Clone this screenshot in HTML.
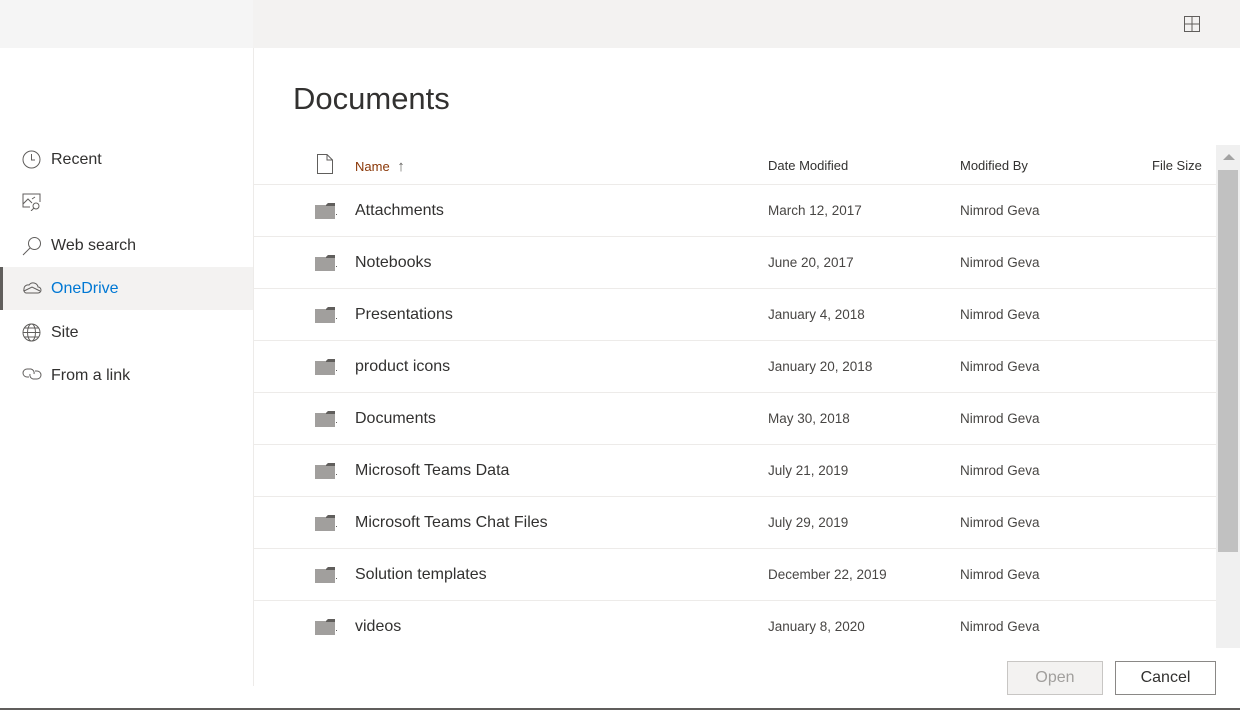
<!DOCTYPE html><html><head><style>
body{margin:0;width:1240px;height:710px;position:relative;overflow:hidden;background:#fff;font-family:"Liberation Sans",sans-serif;color:#323130}
.top{position:absolute;left:0;top:0;width:1240px;height:48px;background:#f3f2f1}
.topl{position:absolute;left:0;top:0;width:253px;height:48px;background:#f5f5f5}
.vl{position:absolute;left:253px;top:48px;width:1px;height:638px;background:#edebe9}
.nav{position:absolute;left:0;width:253px;height:43px;font-size:16px;line-height:44px}
.nav svg{position:absolute;left:22px;top:12px}
.nav span{position:absolute;left:51px}
h1{position:absolute;left:293px;top:81px;margin:0;font-weight:300;font-size:31px;color:#323130}
.hd{position:absolute;top:158px;font-size:13px;color:#323130}
.row{position:absolute;left:254px;width:962px;height:52px;border-top:1px solid #edebe9}
.row .n{position:absolute;left:101px;top:17px;font-size:16px}
.row .d{position:absolute;left:514px;top:18px;font-size:13.5px;color:#484644}
.row .m{position:absolute;left:706px;top:18px;font-size:13.5px;color:#484644}
.row svg{position:absolute;left:60px;top:17px}
.btn{position:absolute;top:661px;height:34px;box-sizing:border-box;border:1px solid #8a8886;font-size:16px;text-align:center;line-height:32px}
</style></head><body>
<div class="top"></div><div class="topl"></div>
<svg style="position:absolute;left:1184px;top:16px" width="16" height="16" viewBox="0 0 16 16" fill="none" stroke="#605e5c"><rect x="0.5" y="0.5" width="15" height="15"/><path d="M8 0.5V15.5M0.5 8H15.5"/></svg>
<div class="vl"></div>
<div class="nav" style="top:138px"><svg width="19" height="19" viewBox="0 0 19 19" fill="none" stroke="#605e5c"><circle cx="9.5" cy="9.5" r="8.5"/><path d="M9.5 4V10H13"/></svg><span>Recent</span></div>
<div class="nav" style="top:181px"><svg width="20" height="18" viewBox="0 0 20 18" fill="none" stroke="#605e5c"><path d="M8 14H1V1H18V9"/><path d="M1 11L6 6L10 10M10 6L13 4"/><circle cx="14" cy="13" r="3"/><path d="M12 15L9 18"/></svg></div>
<div class="nav" style="top:224px"><svg width="20" height="20" viewBox="0 0 20 20" fill="none" stroke="#605e5c"><circle cx="12.5" cy="7.5" r="6"/><path d="M8 12L1 19"/></svg><span>Web search</span></div>
<div class="nav" style="top:267px;background:#f3f2f1;border-left:3px solid #605e5c;box-sizing:border-box"><svg style="left:19px" width="20" height="18" viewBox="0 0 20 18" fill="none" stroke="#605e5c"><path d="M4 14H16A3 3 0 0 0 16 8A5 5 0 0 0 7 6A4 4 0 0 0 2 10A3 3 0 0 0 4 14Z"/><path d="M2 12L10 8L18 12"/></svg><span style="left:48px;color:#0078d4">OneDrive</span></div>
<div class="nav" style="top:311px"><svg width="19" height="19" viewBox="0 0 19 19" fill="none" stroke="#605e5c"><circle cx="9.5" cy="9.5" r="8.5"/><ellipse cx="9.5" cy="9.5" rx="4" ry="8.5"/><path d="M1 9.5H18M2.5 5H16.5M2.5 14H16.5"/></svg><span>Site</span></div>
<div class="nav" style="top:354px"><svg width="20" height="16" viewBox="0 0 20 16" fill="none" stroke="#605e5c"><path d="M7 11H5A4 4 0 0 1 5 3H9A4 4 0 0 1 12 8"/><path d="M13 5H15A4 4 0 0 1 15 13H11A4 4 0 0 1 8 8"/></svg><span>From a link</span></div>
<h1>Documents</h1>
<svg style="position:absolute;left:317px;top:154px" width="16" height="20" viewBox="0 0 16 20" fill="none" stroke="#605e5c"><path d="M0.5 0.5H10L15.5 6V19.5H0.5Z"/><path d="M10 0.5V6H15.5"/></svg>
<div class="hd" style="left:355px;color:#8a3707">Name <span style="color:#605e5c;font-size:15px;margin-left:4px">↑</span></div>
<div class="hd" style="left:768px">Date Modified</div>
<div class="hd" style="left:960px">Modified By</div>
<div class="hd" style="left:1152px">File Size</div>
<div id="rows"></div>
<div style="position:absolute;left:1216px;top:145px;width:24px;height:503px;background:#f0f0f0"></div>
<div style="position:absolute;left:1218px;top:170px;width:20px;height:382px;background:#c1c1c1"></div>
<div style="position:absolute;left:1223px;top:154px;width:0;height:0;border-left:6px solid transparent;border-right:6px solid transparent;border-bottom:6px solid #a3a3a3"></div>
<div class="btn" style="left:1007px;width:96px;background:#f3f2f1;border-color:#c8c6c4;color:#a19f9d">Open</div>
<div class="btn" style="left:1115px;width:101px;background:#fff">Cancel</div>
<div style="position:absolute;left:0;top:708px;width:1240px;height:2px;background:#605e5c"></div>
<script>
var d=[["Attachments","March 12, 2017"],["Notebooks","June 20, 2017"],["Presentations","January 4, 2018"],["product icons","January 20, 2018"],["Documents","May 30, 2018"],["Microsoft Teams Data","July 21, 2019"],["Microsoft Teams Chat Files","July 29, 2019"],["Solution templates","December 22, 2019"],["videos","January 8, 2020"]];
var h="";d.forEach(function(r,i){h+='<div class="row" style="top:'+(184+52*i)+'px"><svg width="24" height="18" viewBox="0 0 24 18"><path d="M1 3H12L14 1H21V17H1Z" fill="#a19f9d"/><path d="M12 3L14 1H21V4H12Z" fill="#605e5c"/><rect x="22" y="12" width="1" height="1" fill="#605e5c"/></svg><span class="n">'+r[0]+'</span><span class="d">'+r[1]+'</span><span class="m">Nimrod Geva</span></div>'});
document.getElementById("rows").innerHTML=h;
</script>
</body></html>
